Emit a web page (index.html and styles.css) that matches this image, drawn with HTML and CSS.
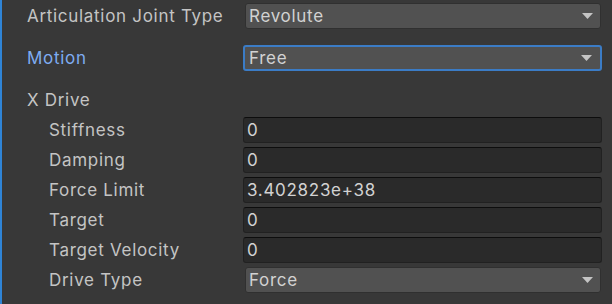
FILE: index.html
```html
<!DOCTYPE html>
<html>
<head>
<meta charset="utf-8">
<link rel="stylesheet" href="styles.css">
</head>
<body>
<div class="inspector">
  <div class="row gap">
    <div class="label">Articulation Joint Type</div>
    <div class="dropdown"><span>Revolute</span><svg class="arrow" width="11" height="6" viewBox="0 0 11 6"><path d="M0 0H11L5.5 6Z"/></svg></div>
  </div>
  <div class="row gap">
    <div class="label focused">Motion</div>
    <div class="dropdown focus"><span>Free</span><svg class="arrow" width="11" height="6" viewBox="0 0 11 6"><path d="M0 0H11L5.5 6Z"/></svg></div>
  </div>
  <div class="row">
    <div class="label">X Drive</div>
  </div>
  <div class="row">
    <div class="label sub">Stiffness</div>
    <div class="input">0</div>
  </div>
  <div class="row">
    <div class="label sub">Damping</div>
    <div class="input">0</div>
  </div>
  <div class="row">
    <div class="label sub">Force Limit</div>
    <div class="input">3.402823e+38</div>
  </div>
  <div class="row">
    <div class="label sub">Target</div>
    <div class="input">0</div>
  </div>
  <div class="row">
    <div class="label sub">Target Velocity</div>
    <div class="input">0</div>
  </div>
  <div class="row">
    <div class="label sub">Drive Type</div>
    <div class="dropdown"><span>Force</span><svg class="arrow" width="11" height="6" viewBox="0 0 11 6"><path d="M0 0H11L5.5 6Z"/></svg></div>
  </div>
</div>
</body>
</html>
```
FILE: styles.css
```css
html, body {
  margin: 0;
  padding: 0;
  background: #383838;
}
body {
  font-family: Inter, "Noto Sans", sans-serif;
  font-size: 17px;
  letter-spacing: 0.7px;
  color: #c4c4c4;
  width: 612px;
  height: 304px;
  overflow: hidden;
}
.inspector {
  border-left: 2px solid #2f84d6;
  height: 304px;
  box-sizing: border-box;
  padding: 1px 10px 0 0;
}
.row {
  display: grid;
  grid-template-columns: 241px 1fr;
  height: 30px;
  align-items: center;
}
.row.gap {
  margin-bottom: 12px;
}
.label {
  padding-left: 25px;
  white-space: nowrap;
}
.label.sub {
  padding-left: 47px;
}
.label.focused {
  color: #7eacf2;
}
.dropdown {
  height: 26px;
  box-sizing: border-box;
  margin-left: 2px;
  margin-right: 1px;
  background: #515151;
  border: 1px solid #303030;
  border-radius: 3px;
  display: flex;
  align-items: center;
  justify-content: space-between;
  padding: 0 7px 0 3px;
  color: #d2d2d2;
}
.dropdown.focus {
  margin-left: 0;
  margin-right: 0;
  border: 2px solid #3b7cc6;
  padding-left: 4px;
  padding-right: 8px;
}
.arrow {
  fill: #c4c4c4;
}
.input {
  height: 26px;
  box-sizing: border-box;
  background: #2a2a2a;
  border: 1px solid #212121;
  border-top-color: #0d0d0d;
  border-radius: 3px;
  display: flex;
  align-items: center;
  padding-left: 3px;
  color: #d2d2d2;
}
```
